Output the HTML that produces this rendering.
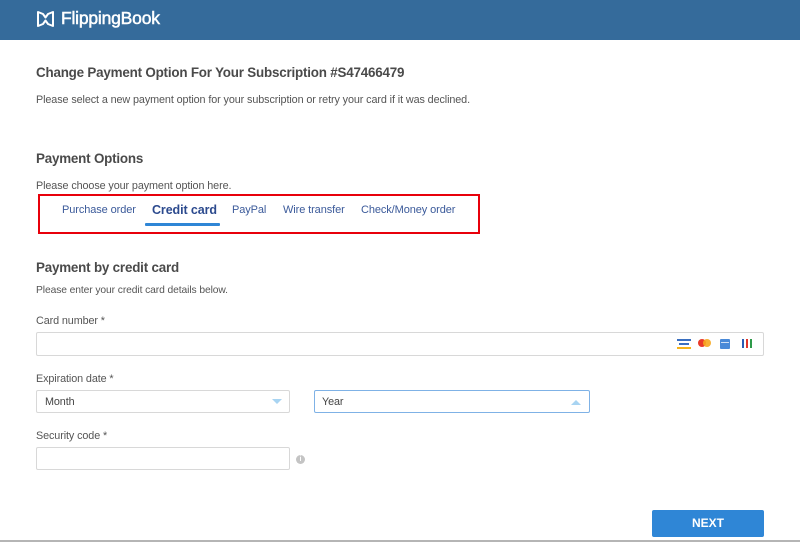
<!DOCTYPE html>
<html><head><meta charset="utf-8"><style>
*{margin:0;padding:0;box-sizing:border-box}
body{width:800px;height:542px;background:#fff;font-family:"Liberation Sans",sans-serif;color:#444;position:relative;overflow:hidden}
.a{position:absolute;white-space:nowrap}
.hdr{left:0;top:0;width:800px;height:40px;background:#356b9b}
.h2{font-size:13.4px;font-weight:bold;color:#4a4a4a;letter-spacing:-0.2px}
.sm{font-size:10.8px;color:#555;letter-spacing:-0.1px}
.lb{font-size:10.8px;color:#555;letter-spacing:-0.1px}
.box{border:1px solid #d8d8d8;border-radius:2px;background:#fff}
.tab{font-size:11px;color:#3b5a9a;top:204px;letter-spacing:-0.1px}
</style></head><body>
<div class="a hdr"></div>
<svg class="a" style="left:36px;top:10px" width="19" height="18" viewBox="0 0 19 18"><path d="M2 2 L7 4 L9.5 7.5 L12 4 L17 2 L17 16 L12 14 L9.5 10.5 L7 14 L2 16 Z" fill="none" stroke="#fff" stroke-width="2" stroke-linejoin="round"/></svg>
<div class="a" style="left:61px;top:8px;font-size:17.5px;color:#fff;letter-spacing:-0.2px;-webkit-text-stroke:0.5px #fff">FlippingBook</div>

<div class="a h2" style="left:36px;top:65px">Change Payment Option For Your Subscription #S47466479</div>
<div class="a sm" style="left:36px;top:94px">Please select a new payment option for your subscription or retry your card if it was declined.</div>

<div class="a h2" style="left:36px;top:151px">Payment Options</div>
<div class="a sm" style="left:36px;top:180px">Please choose your payment option here.</div>
<div class="a" style="left:38px;top:194px;width:442px;height:40px;border:2px solid #e8000b"></div>
<div class="a tab" style="left:62px">Purchase order</div>
<div class="a tab" style="left:152px;top:203px;font-size:12.5px;font-weight:bold;color:#2c4a8e">Credit card</div>
<div class="a" style="left:145px;top:223px;width:75px;height:3px;background:#2f86d6;border-radius:1px"></div>
<div class="a tab" style="left:232px">PayPal</div>
<div class="a tab" style="left:283px">Wire transfer</div>
<div class="a tab" style="left:361px">Check/Money order</div>

<div class="a h2" style="left:36px;top:260px">Payment by credit card</div>
<div class="a sm" style="left:36px;top:285px;font-size:10.3px">Please enter your credit card details below.</div>

<div class="a lb" style="left:36px;top:315px">Card number *</div>
<div class="a box" style="left:36px;top:332px;width:728px;height:24px"></div>
<div class="a" style="left:677px;top:339px;width:14px;height:2px;background:#3a6fc0"></div>
<div class="a" style="left:679px;top:343px;width:10px;height:2px;background:#3a6fc0"></div>
<div class="a" style="left:677px;top:347px;width:14px;height:2px;background:#f5b21a"></div>
<div class="a" style="left:698px;top:339px;width:8px;height:8px;border-radius:50%;background:#ea3a2a"></div>
<div class="a" style="left:703px;top:339px;width:8px;height:8px;border-radius:50%;background:#f7a81f;opacity:.9"></div>
<div class="a" style="left:720px;top:339px;width:10px;height:10px;background:#4a8ad8;border-radius:1px"></div>
<div class="a" style="left:721px;top:342px;width:8px;height:1px;background:#cfe0f6"></div>
<div class="a" style="left:742px;top:339px;width:2px;height:9px;background:#2a5cb5"></div>
<div class="a" style="left:746px;top:339px;width:2px;height:9px;background:#e0352b"></div>
<div class="a" style="left:750px;top:339px;width:2px;height:9px;background:#2e9a4a"></div>

<div class="a lb" style="left:36px;top:373px">Expiration date *</div>
<div class="a box" style="left:36px;top:390px;width:254px;height:23px"></div>
<div class="a lb" style="left:45px;top:396px;color:#444">Month</div>
<div class="a" style="left:272px;top:399px;width:0;height:0;border-left:5px solid transparent;border-right:5px solid transparent;border-top:5px solid #a8d4f2"></div>
<div class="a box" style="left:314px;top:390px;width:276px;height:23px;border-color:#7fb2e6"></div>
<div class="a lb" style="left:322px;top:396px;color:#444">Year</div>
<div class="a" style="left:571px;top:400px;width:0;height:0;border-left:5px solid transparent;border-right:5px solid transparent;border-bottom:5px solid #a8d4f2"></div>

<div class="a lb" style="left:36px;top:430px">Security code *</div>
<div class="a box" style="left:36px;top:447px;width:254px;height:23px"></div>
<div class="a" style="left:296px;top:455px;width:9px;height:9px;border-radius:50%;background:#c4c4c4;color:#fff;font-size:7px;text-align:center;line-height:9px;font-weight:bold">i</div>

<div class="a" style="left:652px;top:510px;width:112px;height:27px;background:#2f86d6;border-radius:2px;color:#fff;font-weight:bold;font-size:12px;text-align:center;line-height:27px">NEXT</div>
<div class="a" style="left:0;top:540px;width:800px;height:2px;background:#b5b5b5"></div>
</body></html>
